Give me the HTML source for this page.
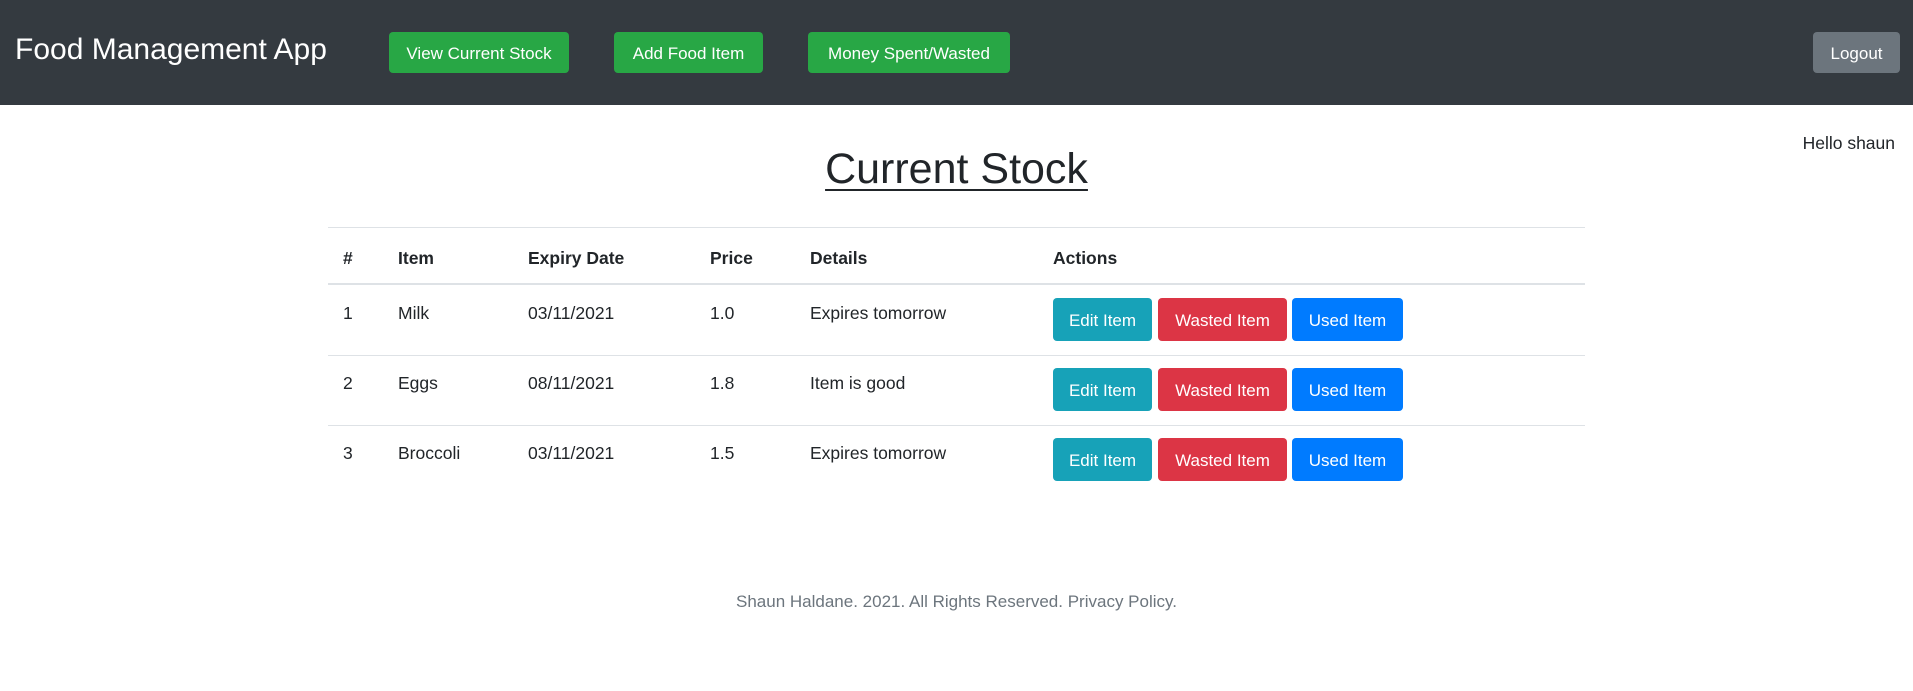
<!DOCTYPE html>
<html><head><style>
*{box-sizing:border-box;margin:0;padding:0}
body{width:1913px;height:691px;background:#fff;font-family:"Liberation Sans",sans-serif;color:#212529;position:relative;overflow:hidden;font-size:17.5px}
.nav{position:absolute;left:0;top:0;width:1913px;height:105px;background:#343a40}
.brand{position:absolute;left:15px;top:33px;font-size:30px;color:#fff;white-space:nowrap}
.btn{position:absolute;color:#fff;border-radius:4px;display:flex;align-items:center;justify-content:center;font-size:17px;white-space:nowrap;padding-top:3px}
.g{background:#28a745;top:32px;height:41px}
.a{position:absolute;white-space:nowrap}
.line{position:absolute;left:328px;width:1257px;height:1px;background:#dee2e6}
.th{font-weight:bold;top:248px}
.e{background:#17a2b8}.w{background:#dc3545}.u{background:#007bff}
</style></head><body>
<div class="nav">
<div class="brand">Food Management App</div>
<div class="btn g" style="left:389px;width:180px">View Current Stock</div>
<div class="btn g" style="left:614px;width:149px">Add Food Item</div>
<div class="btn g" style="left:808px;width:202px">Money Spent/Wasted</div>
<div class="btn" style="left:1813px;top:32px;width:87px;height:41px;background:#6c757d">Logout</div>
</div>
<div class="a" style="right:18px;top:133px">Hello shaun</div>
<div class="a" style="left:0;width:1913px;text-align:center;top:145px;font-size:43px;text-decoration:underline;text-decoration-thickness:2px;text-underline-offset:6px">Current Stock</div>
<div class="line" style="top:227px"></div>
<div class="a th" style="left:343px">#</div>
<div class="a th" style="left:398px">Item</div>
<div class="a th" style="left:528px">Expiry Date</div>
<div class="a th" style="left:710px">Price</div>
<div class="a th" style="left:810px">Details</div>
<div class="a th" style="left:1053px">Actions</div>
<div class="line" style="top:283px;height:2px"></div>

<div class="a" style="left:343px;top:303px">1</div>
<div class="a" style="left:398px;top:303px">Milk</div>
<div class="a" style="left:528px;top:303px">03/11/2021</div>
<div class="a" style="left:710px;top:303px">1.0</div>
<div class="a" style="left:810px;top:303px">Expires tomorrow</div>
<div class="btn e" style="left:1053px;top:298px;width:99px;height:43px">Edit Item</div>
<div class="btn w" style="left:1158px;top:298px;width:129px;height:43px">Wasted Item</div>
<div class="btn u" style="left:1292px;top:298px;width:111px;height:43px">Used Item</div>
<div class="line" style="top:355px"></div>

<div class="a" style="left:343px;top:373px">2</div>
<div class="a" style="left:398px;top:373px">Eggs</div>
<div class="a" style="left:528px;top:373px">08/11/2021</div>
<div class="a" style="left:710px;top:373px">1.8</div>
<div class="a" style="left:810px;top:373px">Item is good</div>
<div class="btn e" style="left:1053px;top:368px;width:99px;height:43px">Edit Item</div>
<div class="btn w" style="left:1158px;top:368px;width:129px;height:43px">Wasted Item</div>
<div class="btn u" style="left:1292px;top:368px;width:111px;height:43px">Used Item</div>
<div class="line" style="top:425px"></div>

<div class="a" style="left:343px;top:443px">3</div>
<div class="a" style="left:398px;top:443px">Broccoli</div>
<div class="a" style="left:528px;top:443px">03/11/2021</div>
<div class="a" style="left:710px;top:443px">1.5</div>
<div class="a" style="left:810px;top:443px">Expires tomorrow</div>
<div class="btn e" style="left:1053px;top:438px;width:99px;height:43px">Edit Item</div>
<div class="btn w" style="left:1158px;top:438px;width:129px;height:43px">Wasted Item</div>
<div class="btn u" style="left:1292px;top:438px;width:111px;height:43px">Used Item</div>

<div class="a" style="left:0;width:1913px;text-align:center;top:592px;color:#6c757d;font-size:17px">Shaun Haldane. 2021. All Rights Reserved. Privacy Policy.</div>
</body></html>
